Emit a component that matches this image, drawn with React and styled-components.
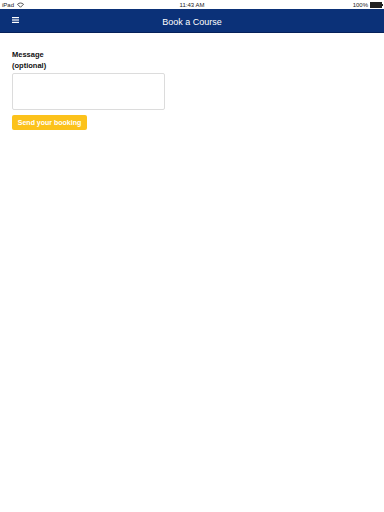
import React from 'react'
import styled, { createGlobalStyle } from 'styled-components'

const Global = createGlobalStyle`
  html, body { margin: 0; padding: 0; background: #fff; }
  body { font-family: "Liberation Sans", Arial, sans-serif; }
`

const App = () => {
    return (
        <>
            <Global />
            <Page>
                <StatusBar>
                    <StatusLeft>
                        iPad
                        <svg width="7" height="6" viewBox="0 0 14 11">
                            <path d="M7 10 L1 4 A8.5 8.5 0 0 1 13 4 Z" fill="none" stroke="#222" strokeWidth="1.5" />
                        </svg>
                    </StatusLeft>
                    <StatusCenter>11:43 AM</StatusCenter>
                    <StatusRight>
                        100%
                        <Battery><BatteryFill /></Battery>
                    </StatusRight>
                </StatusBar>
                <NavBar>
                    <MenuButton>
                        <svg width="7" height="6" viewBox="0 0 7 6">
                            <rect x="0" y="0" width="7" height="1.2" fill="#fff" />
                            <rect x="0" y="2.4" width="7" height="1.2" fill="#fff" />
                            <rect x="0" y="4.8" width="7" height="1.2" fill="#fff" />
                        </svg>
                    </MenuButton>
                    <Title>Book a Course</Title>
                </NavBar>
                <Content>
                    <Label>Message<br />(optional)</Label>
                    <TextArea />
                    <SendButton>Send your booking</SendButton>
                </Content>
            </Page>
        </>
    )
}

export default App

const Page = styled.div`
    width: 384px;
    height: 512px;
    background: #fff;
`

const StatusBar = styled.div`
    height: 9px;
    display: flex;
    align-items: center;
    justify-content: space-between;
    padding: 0 2px;
    font-size: 6px;
    color: #222;
    position: relative;
`

const StatusLeft = styled.div`
    display: flex;
    align-items: center;
    gap: 3px;
`

const StatusCenter = styled.div`
    position: absolute;
    left: 0;
    right: 0;
    text-align: center;
`

const StatusRight = styled.div`
    display: flex;
    align-items: center;
    gap: 2px;
`

const Battery = styled.div`
    width: 10px;
    height: 4px;
    border: 0.5px solid #222;
    position: relative;
    &::after {
        content: "";
        position: absolute;
        right: -2px;
        top: 1px;
        width: 1px;
        height: 2px;
        background: #222;
    }
`

const BatteryFill = styled.div`
    width: 100%;
    height: 100%;
    background: #222;
`

const NavBar = styled.div`
    height: 23px;
    background: #0b3178;
    border-bottom: 1px solid #06215a;
    display: flex;
    align-items: center;
    justify-content: center;
    position: relative;
`

const MenuButton = styled.div`
    position: absolute;
    left: 12px;
    top: 8px;
    display: flex;
`

const Title = styled.div`
    color: #fff;
    font-size: 9px;
    padding-top: 3px;
    font-family: "Liberation Sans", Arial, sans-serif;
`

const Content = styled.div`
    padding: 16px 12px;
    display: flex;
    flex-direction: column;
    align-items: flex-start;
`

const Label = styled.div`
    font-size: 7.5px;
    font-weight: bold;
    line-height: 11px;
    color: #111;
`

const TextArea = styled.textarea`
    margin-top: 2px;
    width: 153px;
    height: 37px;
    box-sizing: border-box;
    border: 1px solid #dcdcdc;
    border-radius: 2px;
    resize: none;
    padding: 0;
    outline: none;
`

const SendButton = styled.button`
    margin-top: 5px;
    width: 75px;
    height: 15px;
    background: #fcc21b;
    border: none;
    border-radius: 2px;
    color: #fff;
    font-family: "Liberation Sans", Arial, sans-serif;
    font-weight: bold;
    font-size: 7px;
    padding: 0;
`
